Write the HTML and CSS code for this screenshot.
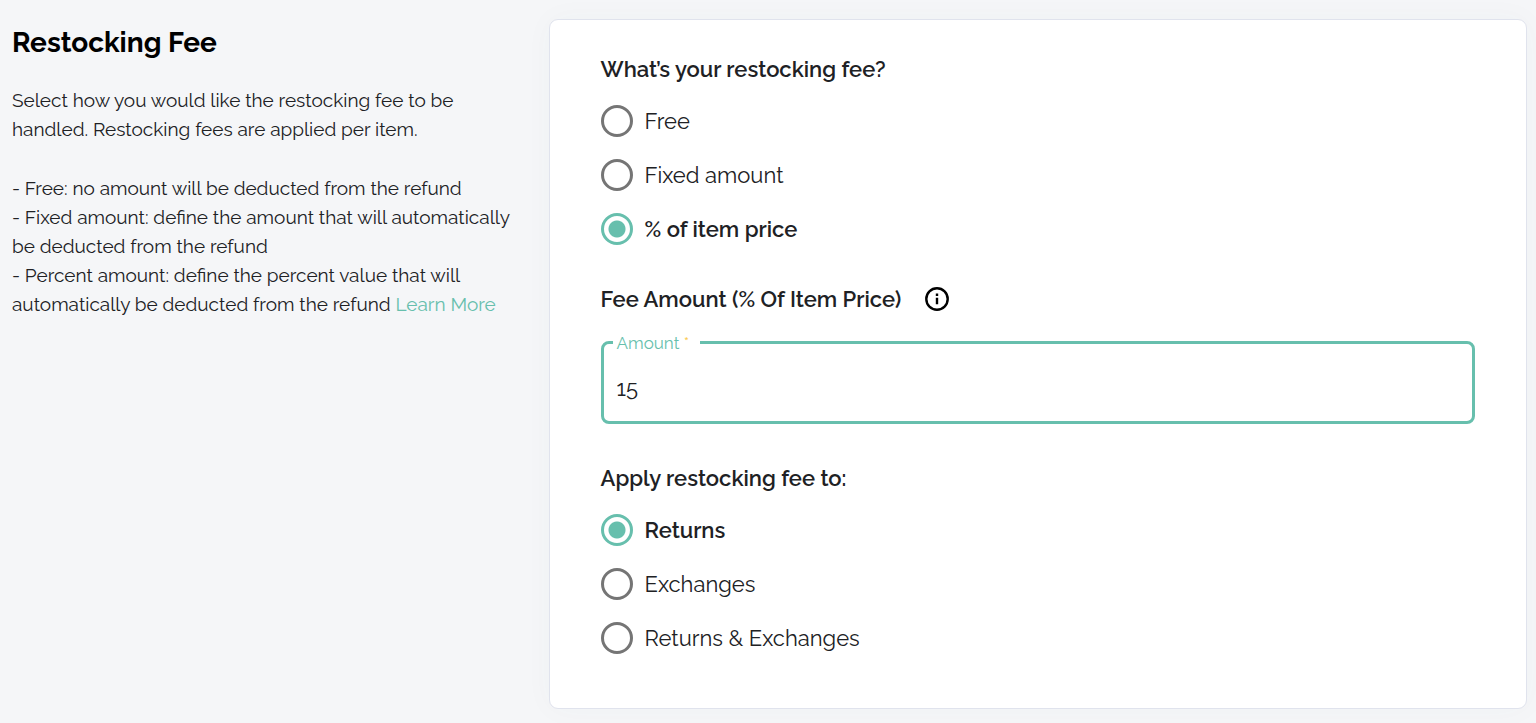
FILE: index.html
```html
<!DOCTYPE html>
<html lang="en">
<head>
  <meta charset="UTF-8">
  <meta name="viewport" content="width=device-width, initial-scale=1.0">
  <title>Restocking Fee</title>
  <link rel="stylesheet" href="styles.css">
</head>
<body>
  <main class="settings">
    <section class="intro">
      <h1 class="intro-title">Restocking Fee</h1>
      <p class="intro-text">Select how you would like the restocking fee to be handled. Restocking fees are applied per item.</p>
      <p class="intro-text">
        - Free: no amount will be deducted from the refund<br>
        - Fixed amount: define the amount that will automatically be deducted from the refund<br>
        - Percent amount: define the percent value that will automatically be deducted from the refund <a href="#" class="learn-more">Learn More</a>
      </p>
    </section>

    <form class="card">
      <div class="radio-group" role="radiogroup" aria-labelledby="fee-title">
        <h2 class="card-title" id="fee-title">What’s your restocking fee?</h2>
        <label class="radio"><input type="radio" name="fee"><span>Free</span></label>
        <label class="radio"><input type="radio" name="fee"><span>Fixed amount</span></label>
        <label class="radio"><input type="radio" name="fee" checked><span>% of item price</span></label>
      </div>

      <div class="amount">
        <div class="amount-header">
          <h2 class="card-title">Fee Amount (% Of Item Price)</h2>
          <svg class="info-icon" viewBox="0 0 24 24" aria-hidden="true">
            <circle cx="12" cy="12" r="10.7" fill="none" stroke="#000" stroke-width="2.4"/>
            <path d="M10.8 10.8h2.4v6.4h-2.4zM10.8 6.6h2.4v2.4h-2.4z"/>
          </svg>
        </div>
        <fieldset class="field">
          <legend class="field-legend"><label for="amount">Amount <span class="required">*</span></label></legend>
          <input type="text" id="amount" class="field-input" inputmode="numeric" value="15" required>
        </fieldset>
      </div>

      <div class="radio-group" role="radiogroup" aria-labelledby="apply-title">
        <h2 class="card-title" id="apply-title">Apply restocking fee to:</h2>
        <label class="radio"><input type="radio" name="apply" checked><span>Returns</span></label>
        <label class="radio"><input type="radio" name="apply"><span>Exchanges</span></label>
        <label class="radio"><input type="radio" name="apply"><span>Returns &amp; Exchanges</span></label>
      </div>
    </form>
  </main>
</body>
</html>
```
FILE: styles.css
```css
* {
  box-sizing: border-box;
}
body {
  margin: 0;
  font-family: Raleway, Lato, sans-serif;
  color: #202124;
  background-color: #f5f6f8;
}
.settings {
  display: grid;
  grid-template-columns: 11fr 21fr;
  gap: 24px;
  padding: 19px 9px 14px 12px;
}
.intro {
  padding-top: 6px;
}
.intro-title {
  margin: 0 0 25px;
  font-size: 28px;
  line-height: 36px;
  font-weight: 700;
  color: #000;
}
.intro-text {
  margin: 0 0 30px;
  font-size: 19px;
  line-height: 29px;
}
.learn-more {
  color: #67bfad;
  text-decoration: none;
}
.card {
  display: flex;
  flex-direction: column;
  gap: 40px;
  padding: 35px 51px 54px;
  background-color: #fff;
  border: 1px solid #e0e3ed;
  border-radius: 9px;
  box-shadow: 0 0 30px rgba(50, 80, 100, 0.03);
}
.card-title {
  margin: 0;
  font-size: 22px;
  line-height: 28px;
  font-weight: 600;
}
.radio-group {
  display: flex;
  flex-direction: column;
  align-items: flex-start;
  gap: 22px;
}
.radio {
  display: flex;
  align-items: center;
  gap: 12px;
  font-size: 22px;
  line-height: 32px;
}
.radio input {
  appearance: none;
  width: 32px;
  height: 32px;
  margin: 0;
  border: 3px solid #757575;
  border-radius: 50%;
}
.radio input:checked {
  border-color: #67bfad;
  background: radial-gradient(circle, #67bfad 8px, transparent 9px);
}
.radio input:checked + span {
  font-weight: 600;
}
.amount-header {
  display: flex;
  align-items: center;
  gap: 24px;
  margin-bottom: 18px;
}
.info-icon {
  width: 24px;
  height: 24px;
}
.field {
  min-width: 0;
  margin: 0;
  padding: 0 9px;
  border: 3px solid #67bfad;
  border-radius: 8px;
}
.field-legend {
  padding: 2px 11px 0 4px;
  font-size: 17px;
  line-height: 20px;
  color: #67bfad;
}
.required {
  color: #fbc94a;
}
.field-input {
  display: block;
  width: 100%;
  height: 68px;
  padding: 2px 4px 0;
  border: 0;
  outline: 0;
  font: inherit;
  font-size: 22px;
  color: inherit;
  background: transparent;
}
```
